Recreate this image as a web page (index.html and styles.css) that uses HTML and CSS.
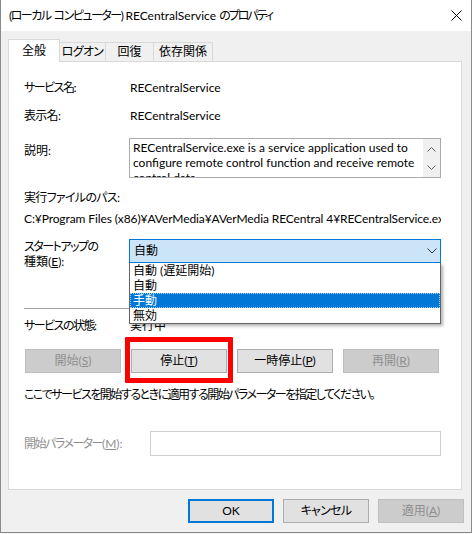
FILE: index.html
```html
<!DOCTYPE html>
<html lang="ja">
<head>
    <meta charset="UTF-8">
    <title>RECentralService のプロパティ</title>
    <link rel="stylesheet" href="styles.css">
</head>
<body>
    <div class="window">
        <div class="titlebar">
            <span class="title"><span class="tight">(ローカル</span> <span class="tight">コンピューター)</span> RECentralService <span class="tighter">のプロパティ</span></span>
            <svg class="close" width="11" height="11" viewBox="0 0 11 11">
                <path d="M0.5 0.5 L10.5 10.5 M10.5 0.5 L0.5 10.5" stroke="#000" stroke-width="1" fill="none"/>
            </svg>
        </div>

        <div class="tabs">
            <div class="tab active tab-general">全般</div>
            <div class="tab tab-logon"><span class="tight-s">ログオン</span></div>
            <div class="tab tab-recovery">回復</div>
            <div class="tab tab-deps">依存関係</div>
        </div>

        <div class="panel">
            <div class="field">
                <span class="label tight">サービス名:</span>
                <span class="value">RECentralService</span>
            </div>
            <div class="field field-display">
                <span class="label tight-s">表示名:</span>
                <span class="value">RECentralService</span>
            </div>
            <div class="field field-desc">
                <span class="label">説明:</span>
                <div class="desc">
                    <div class="desc-text">RECentralService.exe is a service application used to<br>configure remote control function and receive remote<br>control data.</div>
                    <div class="scrollbar">
                        <svg width="9" height="5" viewBox="0 0 9 5"><path d="M0.5 4.5 L4.5 0.5 L8.5 4.5" stroke="#606060" fill="none"/></svg>
                        <svg width="9" height="5" viewBox="0 0 9 5"><path d="M0.5 0.5 L4.5 4.5 L8.5 0.5" stroke="#606060" fill="none"/></svg>
                    </div>
                </div>
            </div>
            <div class="path-label tight-s">実行ファイルのパス:</div>
            <div class="path">C:¥Program Files (x86)¥AVerMedia¥AVerMedia RECentral 4¥RECentralService.exe</div>

            <div class="field field-startup">
                <span class="label label-startup"><span class="tight">スタートアップの</span><br>種類(<u>E</u>):</span>
                <div class="combo-wrap">
                    <div class="combo">
                        <span>自動</span>
                        <svg width="10" height="6" viewBox="0 0 10 6"><path d="M0.5 0.5 L5 5 L9.5 0.5" stroke="#333" fill="none"/></svg>
                    </div>
                    <ul class="dropdown">
                        <li>自動 (遅延開始)</li>
                        <li>自動</li>
                        <li class="selected">手動</li>
                        <li>無効</li>
                    </ul>
                </div>
            </div>

            <div class="separator"></div>

            <div class="field field-status">
                <span class="label"><span class="tight">サービスの状態</span>:</span>
                <span class="value">実行中</span>
            </div>

            <div class="buttons">
                <button class="btn" disabled>開始(<u>S</u>)</button>
                <div class="btn-mark">
                    <button class="btn">停止(<u>T</u>)</button>
                    <span class="highlight"></span>
                </div>
                <button class="btn">一時停止(<u>P</u>)</button>
                <button class="btn" disabled>再開(<u>R</u>)</button>
            </div>

            <p class="help tight">ここでサービスを開始するときに適用する開始パラメーターを指定してください。</p>

            <div class="field field-param">
                <span class="label label-param"><span class="tight">開始パラメーター</span>(<u>M</u>):</span>
                <div class="param-input"></div>
            </div>
        </div>

        <div class="footer">
            <button class="btn btn-footer default">OK</button>
            <button class="btn btn-footer"><span class="tight-s">キャンセル</span></button>
            <button class="btn btn-footer" disabled>適用(<u>A</u>)</button>
        </div>
    </div>
</body>
</html>
```

FILE: styles.css
```css
/* Grundstil */
body {
    margin: 0;
    background: #f0f0f0;
    font-family: Lato, "Noto Sans CJK JP", sans-serif;
    font-size: 12px;
    line-height: 16px;
    font-feature-settings: "palt";
    color: #000;
}

/* Japansk text är bredare än i Yu Gothic UI */
.tight {
    letter-spacing: -1.5px;
}

.tighter {
    letter-spacing: -2px;
}

.tight-s {
    letter-spacing: -0.7px;
}

.window {
    width: 472px;
    height: 533px;
    box-sizing: border-box;
    border: 1px solid #8a8a8a;
    border-top: none;
    background: #f0f0f0;
    display: flex;
    flex-direction: column;
}

/* Titelrad */
.titlebar {
    height: 31px;
    flex: none;
    background: #fff;
    display: flex;
    align-items: center;
    justify-content: space-between;
    padding: 0 9px 0 8px;
}

.close {
    display: block;
}

/* Flikar */
.tabs {
    display: flex;
    align-items: flex-end;
    height: 22px;
    margin: 8px 0 0 7px;
}

.tab {
    height: 19px;
    box-sizing: border-box;
    border: 1px solid #d9d9d9;
    border-bottom: none;
    margin-left: -1px;
    text-align: center;
    line-height: 17px;
    background: #f0f0f0;
}

.tab.active {
    height: 23px;
    margin-left: 0;
    margin-bottom: -1px;
    line-height: 21px;
    background: #fff;
    position: relative;
    z-index: 1;
}

.tab-general { width: 52px; }
.tab-logon { width: 47px; }
.tab-recovery { width: 49px; }
.tab-deps { width: 60px; }

/* Panel */
.panel {
    height: 429px;
    flex: none;
    box-sizing: border-box;
    margin: 0 9px 0 7px;
    border: 1px solid #d9d9d9;
    background: #fff;
    padding: 18px 20px 0 15px;
}

.field {
    display: flex;
    align-items: flex-start;
}

.label {
    width: 105px;
    flex: none;
}

.value {
    padding-left: 1px;
}

.field-display {
    margin-top: 12px;
}

.field-desc {
    margin-top: 14px;
}

.field-desc .label {
    margin-top: 5px;
}

.desc {
    width: 312px;
    height: 40px;
    box-sizing: border-box;
    border: 1px solid #ababab;
    display: flex;
    overflow: hidden;
}

.desc-text {
    flex: 1;
    padding: 1px 0 0 3px;
    line-height: 15px;
    white-space: nowrap;
    overflow: hidden;
}

.scrollbar {
    width: 17px;
    flex: none;
    background: #f0f0f0;
    display: flex;
    flex-direction: column;
    justify-content: space-between;
    align-items: center;
    padding: 8px 0 7px;
    box-sizing: border-box;
}

.scrollbar svg {
    display: block;
}

.path-label {
    margin-top: 12px;
}

.path {
    margin-top: 5px;
    white-space: nowrap;
    overflow: hidden;
    letter-spacing: -0.1px;
}

/* Starttyp */
.field-startup {
    margin-top: 12px;
}

.label-startup {
    line-height: 15px;
}

.combo-wrap {
    position: relative;
    width: 312px;
}

.combo {
    height: 24px;
    box-sizing: border-box;
    border: 1px solid #0078d7;
    background: #cce4f7;
    display: flex;
    align-items: center;
    justify-content: space-between;
    padding: 0 3px 0 4px;
}

.combo svg {
    display: block;
}

.dropdown {
    position: absolute;
    top: 100%;
    left: 0;
    width: 100%;
    box-sizing: border-box;
    margin: 0;
    padding: 0;
    list-style: none;
    background: #fff;
    border: 1px solid #646464;
    border-top: none;
    box-shadow: 2px 2px 3px rgba(0, 0, 0, 0.3);
    z-index: 2;
}

.dropdown li {
    height: 15px;
    line-height: 15px;
    padding-left: 3px;
}

.dropdown li.selected {
    background: #0078d7;
    color: #fff;
    outline: 1px dotted #a8d0f2;
    outline-offset: -1px;
}

.separator {
    height: 1px;
    background: #a0a0a0;
    margin-top: 39px;
}

.field-status {
    margin-top: 9px;
}

/* Knappar */
.buttons {
    display: flex;
    gap: 10px;
    margin: 15px 0 0 1px;
}

.btn {
    width: 96px;
    height: 24px;
    box-sizing: border-box;
    padding: 0;
    border: 1px solid #adadad;
    background: #e1e1e1;
    font: inherit;
    color: #000;
    text-align: center;
}

.btn:disabled {
    background: #cccccc;
    border-color: #bfbfbf;
    color: #8f8f8f;
}

.btn-mark {
    position: relative;
}

.btn-mark .btn {
    display: block;
}

.highlight {
    position: absolute;
    top: -12px;
    left: -6px;
    right: -6px;
    bottom: -10px;
    border: 5px solid #ff0000;
    border-radius: 1px;
}

.help {
    margin: 14px 0 0;
}

.field-param {
    margin-top: 28px;
    align-items: center;
}

.label-param {
    width: 126px;
    color: #8f8f8f;
}

.param-input {
    width: 291px;
    height: 25px;
    box-sizing: border-box;
    border: 1px solid #cfcfcf;
    background: #fff;
}

/* Sidfot */
.footer {
    display: flex;
    justify-content: flex-end;
    gap: 9px;
    margin-top: 9px;
    padding-right: 7px;
}

.btn-footer {
    width: 86px;
}

.btn.default {
    border: 2px solid #0078d7;
}
```
